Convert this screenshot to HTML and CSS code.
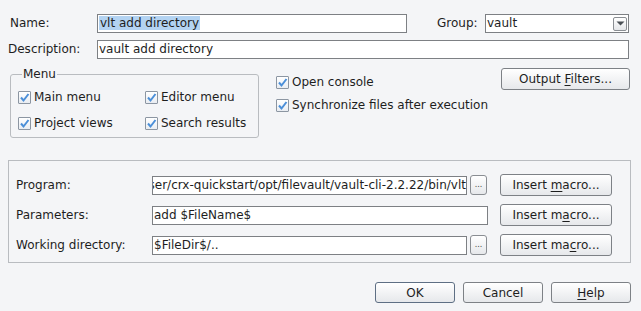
FILE: index.html
```html
<!DOCTYPE html>
<html lang="en">
<head>
  <meta charset="UTF-8">
  <title>Edit Tool</title>
  <link rel="stylesheet" href="styles.css">
</head>
<body>
  <div class="dialog">
    <div class="row">
      <label class="label name-label">Name:</label>
      <div class="field name-field"><span class="selected">vlt add directory</span></div>
      <label class="label group-label">Group:</label>
      <div class="field combo">
        <span class="combo-text">vault</span>
        <span class="combo-arrow">
          <svg width="9" height="5" viewBox="0 0 9 5"><path d="M0.5 0.5h8L4.5 4.5z" fill="#4a4f55"/></svg>
        </span>
      </div>
    </div>

    <div class="row row-desc">
      <label class="label desc-label">Description:</label>
      <div class="field grow">vault add directory</div>
    </div>

    <div class="options">
      <fieldset class="menu-box">
        <legend>Menu</legend>
        <div class="menu-grid">
          <label class="check"><span class="box"><svg width="13" height="13" viewBox="0 0 13 13"><path d="M3 6.5l2.5 3L10.5 3" fill="none" stroke="#4b8fd8" stroke-width="2"/></svg></span>Main menu</label>
          <label class="check"><span class="box"><svg width="13" height="13" viewBox="0 0 13 13"><path d="M3 6.5l2.5 3L10.5 3" fill="none" stroke="#4b8fd8" stroke-width="2"/></svg></span>Editor menu</label>
          <label class="check"><span class="box"><svg width="13" height="13" viewBox="0 0 13 13"><path d="M3 6.5l2.5 3L10.5 3" fill="none" stroke="#4b8fd8" stroke-width="2"/></svg></span>Project views</label>
          <label class="check"><span class="box"><svg width="13" height="13" viewBox="0 0 13 13"><path d="M3 6.5l2.5 3L10.5 3" fill="none" stroke="#4b8fd8" stroke-width="2"/></svg></span>Search results</label>
        </div>
      </fieldset>

      <div class="run-checks">
        <label class="check"><span class="box"><svg width="13" height="13" viewBox="0 0 13 13"><path d="M3 6.5l2.5 3L10.5 3" fill="none" stroke="#4b8fd8" stroke-width="2"/></svg></span>Open console</label>
        <label class="check"><span class="box"><svg width="13" height="13" viewBox="0 0 13 13"><path d="M3 6.5l2.5 3L10.5 3" fill="none" stroke="#4b8fd8" stroke-width="2"/></svg></span>Synchronize files after execution</label>
      </div>

      <button class="btn filters-btn">Output <u>F</u>ilters...</button>
    </div>

    <div class="tool-box">
      <div class="tool-row">
        <label class="label tool-label">Program:</label>
        <div class="field path-field scrolled"><span>/home/user/crx-quickstart/opt/filevault/vault-cli-2.2.22/bin/vlt</span></div>
        <button class="browse">...</button>
        <button class="btn macro-btn">Insert <u>m</u>acro...</button>
      </div>
      <div class="tool-row">
        <label class="label tool-label">Parameters:</label>
        <div class="field param-field">add $FileName$</div>
        <button class="btn macro-btn">Insert m<u>a</u>cro...</button>
      </div>
      <div class="tool-row">
        <label class="label tool-label">Working directory:</label>
        <div class="field path-field">$FileDir$/..</div>
        <button class="browse">...</button>
        <button class="btn macro-btn">Insert ma<u>c</u>ro...</button>
      </div>
    </div>

    <div class="actions">
      <button class="btn action-btn default-btn">OK</button>
      <button class="btn action-btn">Cancel</button>
      <button class="btn action-btn"><u>H</u>elp</button>
    </div>
  </div>
</body>
</html>
```

FILE: styles.css
```css
:root {
  --bg: #f4f5f7;
  --text: #1e1e1e;
  --field-border: #7d8084;
  --box-border: #b9bcc0;
}

* {
  margin: 0;
  padding: 0;
  box-sizing: border-box;
}

body {
  background: var(--bg);
  color: var(--text);
  font-family: "DejaVu Sans", sans-serif;
  font-size: 12px;
  width: 641px;
  height: 311px;
  overflow: hidden;
}

.dialog {
  padding: 14px 12px 0 8px;
}

.row {
  display: flex;
  align-items: center;
  height: 19px;
}

.row-desc {
  margin-top: 7px;
}

.label {
  line-height: 19px;
  white-space: nowrap;
}

.name-label {
  width: 89px;
  padding-left: 2px;
}

.desc-label {
  width: 89px;
}

.group-label {
  width: 48px;
  margin-left: 30px;
}

.field {
  height: 19px;
  border: 1px solid var(--field-border);
  background: #fff;
  line-height: 17px;
  padding-left: 1px;
  white-space: nowrap;
  overflow: hidden;
}

.grow {
  flex: 1;
}

.name-field {
  width: 310px;
}

.selected {
  background: #b3d3f2;
  padding: 0 1px;
}

.combo {
  flex: 1;
  display: flex;
  align-items: center;
  justify-content: space-between;
  padding-right: 1px;
}

.combo-arrow {
  display: flex;
  align-items: center;
  justify-content: center;
  width: 14px;
  height: 14px;
  border: 1px solid #8a8e93;
  border-radius: 2px;
  background: linear-gradient(#ffffff, #e4e6e9);
}

/* checkboxes and menu box */

.options {
  display: flex;
  align-items: flex-start;
  margin-top: 9px;
}

.menu-box {
  width: 249px;
  height: 70px;
  margin-left: 2px;
  border: 1px solid var(--box-border);
  border-radius: 3px;
  padding: 0 0 0 7px;
}

.menu-box legend {
  line-height: 13px;
  padding: 0 1px;
  margin-left: 4px;
}

.menu-grid {
  display: grid;
  grid-template-columns: 127px 1fr;
  row-gap: 10px;
  padding-top: 8px;
}

.check {
  display: flex;
  align-items: center;
  gap: 3px;
  line-height: 16px;
  white-space: nowrap;
}

.box {
  display: inline-flex;
  width: 13px;
  height: 13px;
  border: 1px solid #8c96a2;
  border-radius: 1px;
  background: linear-gradient(#ffffff, #e9edf2);
}

.box svg {
  margin: -1px;
}

.run-checks {
  display: flex;
  flex-direction: column;
  gap: 7px;
  margin-left: 17px;
  padding-top: 6px;
}

.btn {
  font-family: inherit;
  font-size: 12px;
  color: var(--text);
  border: 1px solid #7d8186;
  border-radius: 3px;
  background: linear-gradient(#ffffff, #e6e8eb);
  height: 22px;
}

.btn u {
  text-underline-offset: 2px;
}

.filters-btn {
  width: 129px;
  margin-left: auto;
  margin-right: -1px;
}

/* program group box */

.tool-box {
  margin-top: 22px;
  margin-right: -2px;
  border: 1px solid var(--box-border);
  padding: 13px 18px 6px 7px;
  display: flex;
  flex-direction: column;
  gap: 8px;
}

.tool-row {
  display: flex;
  align-items: center;
}

.tool-label {
  width: 136px;
}

.path-field {
  width: 315px;
}

.scrolled {
  display: flex;
  justify-content: flex-end;
}

.scrolled span {
  flex-shrink: 0;
}

.param-field {
  width: 336px;
}

.browse {
  width: 17px;
  height: 20px;
  margin-left: 3px;
  border: 1px solid #8a8e93;
  border-radius: 3px;
  background: linear-gradient(#ffffff, #e6e8eb);
  font-family: inherit;
  font-size: 8px;
  color: #444;
  line-height: 10px;
}

.macro-btn {
  width: 112px;
  margin-left: auto;
}

/* bottom buttons */

.actions {
  display: flex;
  justify-content: flex-end;
  gap: 8px;
  margin-top: 19px;
  margin-right: -2px;
}

.action-btn {
  width: 80px;
  height: 21px;
}

.default-btn {
  border-color: #5e6f84;
}
```
